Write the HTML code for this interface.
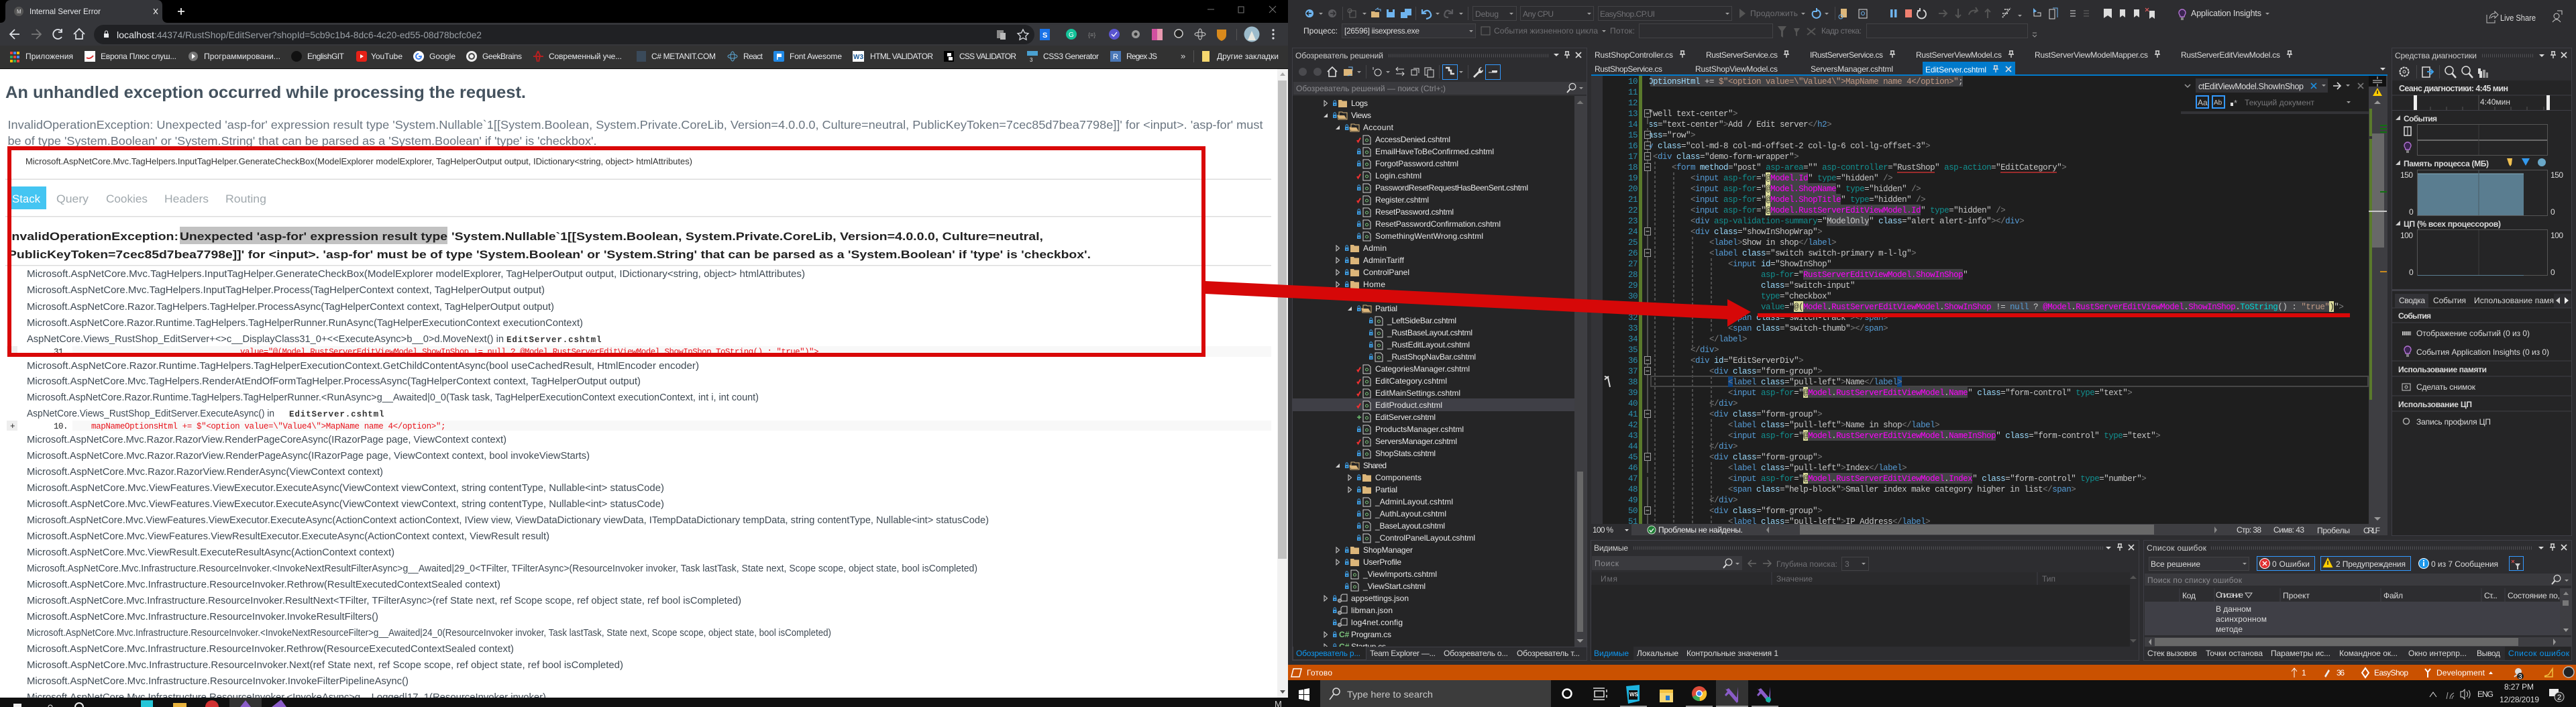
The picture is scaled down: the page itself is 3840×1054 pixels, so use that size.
<!DOCTYPE html>
<html><head><meta charset="utf-8"><title>Internal Server Error</title>
<style>
html,body{margin:0;padding:0;background:#000;width:3840px;height:1054px;overflow:hidden}
svg{display:block;position:absolute;left:0;top:0}
text{font-family:"Liberation Sans","Noto Sans CJK JP",sans-serif;white-space:pre}
.m text,text.m{font-family:"Liberation Mono","DejaVu Sans Mono",monospace;font-size:12.5px;letter-spacing:-.5px}
.g{fill:#808080}.b{fill:#569cd6}.a{fill:#9cdcfe}.t{fill:#129090}.p{fill:#ff00ff}.s{fill:#c09a84}.k{fill:#1e1e1e}.c{fill:#00d8d8}
.ln text{font-family:"Liberation Mono",monospace;font-size:12.5px;letter-spacing:-.5px;fill:#2b91af;text-anchor:end}
.st text{font-size:14.5px;fill:#3f4a54}
.tr text{font-size:12px;fill:#e8e8e8}
.bm text{font-size:12px;fill:#e8eaed}
.ui text{font-size:12px;fill:#dcdcdc}
.dim text{font-size:12px;fill:#707074}
.blue{fill:#0e97f0 !important}
</style></head><body>
<svg width="3840" height="1054" viewBox="0 0 3840 1054" xmlns="http://www.w3.org/2000/svg">
<defs>
<clipPath id="cc"><rect x="2459" y="113" width="1072" height="668"/></clipPath>
<clipPath id="ct"><rect x="1927" y="143" width="420" height="821"/></clipPath>
<clipPath id="cb"><rect x="0" y="103" width="1904" height="937"/></clipPath>
<g id="l"><rect x="-27" y="-1" width="5.5" height="5" fill="#3d9be0"/><path d="M-26 -1v-1.5a1.7 1.7 0 0 1 3.4 0V-1" fill="none" stroke="#3d9be0"/><rect x="-25" y="1" width="1.5" height="1.5" fill="#252526"/></g>
<g id="fi"><path d="M-18 -6h8l3 3v10h-11z" fill="#252526" stroke="#d0d0d0"/><circle cx="-12.5" cy="1" r="2" fill="none" stroke="#7cc47c"/></g>
<g id="ck"><path d="M-27 1l1.5 2.5 3.5-6" stroke="#f03030" stroke-width="2" fill="none"/></g>
<g id="lf"><use href="#l"/><use href="#fi"/></g>
<g id="cf"><use href="#ck"/><use href="#fi"/></g>
<g id="cl"><path d="M-40 -4l4.5 4-4.5 4z" fill="none" stroke="#d0d0d0"/><use href="#l"/><path d="M-19 -5h5l1 1.5h7v9.5h-13z" fill="#dcb67a"/></g>
<g id="op"><path d="M-35 -3v6h-6z" fill="#d0d0d0"/><use href="#l"/><path d="M-18 -5h5l1 1h6v10h-13l-1-6h2z" fill="#252526" stroke="#dcb67a"/><path d="M-20 0h10l3 5h-11z" fill="#dcb67a"/></g>
<g id="jn"><use href="#l"/><path d="M-15 4v-8l2-2h7v10z" fill="#252526" stroke="#d0d0d0"/><circle cx="-17" cy="3.5" r="2.5" fill="#777" stroke="#ccc"/></g>
<g id="pin"><path d="M-3 -5h6M-2 -5v5h4v-5M-4 0h8M0 0v5" stroke="#dcdcdc" stroke-width="1.4" fill="none"/></g>
<g id="xx"><path d="M-4 -4l8 8M4 -4l-8 8" stroke="#dcdcdc" stroke-width="1.6"/></g>
<g id="dn"><path d="M-3 -2h6l-3 3z" fill="#a0a0a0"/></g>
<g id="se"><circle r="6" fill="none" stroke="#dcdcdc" stroke-width="1.5"/><path d="M4 4l6 7" stroke="#dcdcdc" stroke-width="2.5"/></g>
<g id="bu"><path d="M-5 -2a5 5 0 1 1 10 0c0 3-2 3-2 6h-6c0-3-2-3-2-6z" fill="#3a2450" stroke="#b070d0" stroke-width="1.4"/><path d="M-2 6h4M-2 8h4" stroke="#ddd"/></g>
</defs>

<!-- browser chrome -->
<rect x="0" y="0" width="1920" height="34" fill="#000"/>
<rect x="0" y="34" width="1920" height="34" fill="#35363a"/>
<rect x="0" y="68" width="1920" height="34" fill="#323232"/>
<rect x="0" y="102" width="1920" height="1" fill="#111"/>
<path d="M0 34c6 0 8-3 8-8V8c0-5 3-8 8-8h218c5 0 8 3 8 8v18c0 5 3 8 8 8z" fill="#35363a"/>
<circle cx="28" cy="17" r="7" fill="#555"/><text x="25" y="20" font-size="8" fill="#ddd">M</text>
<text x="44" y="21" font-size="12" fill="#e8eaed" textLength="106" lengthAdjust="spacingAndGlyphs">Internal Server Error</text>
<path d="M229 13l6 8M235 13l-6 8" stroke="#ddd" stroke-width="1.3"/>
<path d="M270 12v10M265 17h10" stroke="#eee" stroke-width="1.8"/>
<path d="M1800 14h10" stroke="#777"/><rect x="1846" y="10" width="8" height="9" fill="none" stroke="#777"/><path d="M1892 9l10 10M1902 9l-10 10" stroke="#777"/>
<path d="M29 51H15M22 44l-7 7 7 7" fill="none" stroke="#dee1e6" stroke-width="1.8"/>
<path d="M47 51h14M54 44l7 7-7 7" fill="none" stroke="#777" stroke-width="1.8"/>
<path d="M92 47a7 7 0 1 0 0 8M92 43v5h-5" fill="none" stroke="#dee1e6" stroke-width="1.8"/>
<path d="M110 51l8-8 8 8M113 50v8h10v-8" fill="none" stroke="#dee1e6" stroke-width="1.7"/>
<rect x="140" y="37" width="1402" height="29" rx="14.5" fill="#202124"/>
<rect x="155" y="50" width="7" height="6" fill="#e8eaed"/><path d="M156.500 50v-2a2 2 0 0 1 4 0v2" fill="none" stroke="#e8eaed"/>
<text x="174" y="57" font-size="14" fill="#e8eaed" textLength="56" lengthAdjust="spacingAndGlyphs">localhost</text>
<text x="230" y="57" font-size="14" fill="#9aa0a6" textLength="488" lengthAdjust="spacingAndGlyphs">:44374/RustShop/EditServer?shopId=5cb9c1b4-8dc6-4c20-ed55-08d78bcfc0e2</text>
<rect x="1486" y="45" width="10" height="12" fill="#888"/><rect x="1491" y="49" width="8" height="10" fill="#bbb"/>
<path d="M1525 44l2.500 5 5.500.8-4 3.900 1 5.500-5-2.600-5 2.600 1-5.500-4-3.900 5.500-.8z" fill="none" stroke="#dee1e6" stroke-width="1.3"/>
<rect x="1550" y="43" width="15" height="17" fill="#1a73e8"/><text x="1554" y="56" font-size="11" font-weight="bold" fill="#fff">S</text>
<circle cx="1597" cy="51" r="8" fill="#15c39a"/><text x="1593" y="55" font-size="10" fill="#fff">G</text>
<text x="1622" y="55" font-size="9" fill="#888">{≡}</text>
<circle cx="1661" cy="51" r="8" fill="#5a55d0"/><path d="M1657 51l3 3 5-6" fill="none" stroke="#fff" stroke-width="1.3"/>
<circle cx="1693" cy="51" r="6" fill="#999"/><circle cx="1693" cy="51" r="2.500" fill="#333"/>
<rect x="1717" y="43" width="16" height="17" fill="#d050a0"/><rect x="1725" y="43" width="8" height="17" fill="#e898b0"/>
<circle cx="1757" cy="50" r="6" fill="#222" stroke="#ccc" stroke-width="1.500"/>
<ellipse cx="1789" cy="51" rx="8" ry="3" fill="none" stroke="#ccc"/><ellipse cx="1789" cy="51" rx="3" ry="8" fill="none" stroke="#ccc"/>
<path d="M1814 44h14v8q0 6-7 9-7-3-7-9z" fill="#d98a1c"/>
<rect x="1843" y="43" width="1" height="17" fill="#555"/>
<circle cx="1866" cy="51" r="11.500" fill="#9dbccc"/><path d="M1860 60l6-14 6 14z" fill="#e8e8e0"/>
<circle cx="1898" cy="45" r="1.600" fill="#dee1e6"/><circle cx="1898" cy="51" r="1.600" fill="#dee1e6"/><circle cx="1898" cy="57" r="1.600" fill="#dee1e6"/>
<!-- bookmarks -->
<g fill="#e8a317"><rect x="15" y="77" width="4" height="4" fill="#ea4335"/><rect x="20" y="77" width="4" height="4" fill="#4285f4"/><rect x="25" y="77" width="4" height="4" fill="#fbbc04"/><rect x="15" y="83" width="4" height="4" fill="#34a853"/><rect x="20" y="83" width="4" height="4" fill="#ea4335"/><rect x="25" y="83" width="4" height="4" fill="#4285f4"/><rect x="15" y="89" width="4" height="4" fill="#fbbc04"/><rect x="20" y="89" width="4" height="4" fill="#34a853"/><rect x="25" y="89" width="4" height="4" fill="#ea4335"/></g>
<rect x="126" y="76" width="16" height="16" fill="#fff"/><path d="M129 86q5 3 10-3" stroke="#d33" stroke-width="2" fill="none"/>
<circle cx="288" cy="84" r="7" fill="#777"/><path d="M286 80l5 4-5 4z" fill="#fff"/>
<circle cx="442" cy="84" r="8" fill="#111"/>
<rect x="531" y="76" width="16" height="16" rx="3" fill="#e62117"/><path d="M537 81l5 3-5 3z" fill="#fff"/>
<circle cx="624" cy="84" r="8" fill="#fff"/><path d="M624 80a4 4 0 1 0 4 4h-4" fill="none" stroke="#4285f4" stroke-width="2"/>
<circle cx="703" cy="84" r="8" fill="#eee"/><circle cx="703" cy="84" r="4" fill="none" stroke="#444" stroke-width="2"/>
<path d="M802 76l3 7-2 9M802 76l-3 7 2 9M795 84h15" stroke="#b52020" stroke-width="2" fill="none"/>
<rect x="949" y="76" width="14" height="16" fill="#3a4a5a"/>
<ellipse cx="1092" cy="84" rx="7" ry="3" fill="none" stroke="#5ba4cf"/><ellipse cx="1092" cy="84" rx="3" ry="7" fill="none" stroke="#5ba4cf"/>
<rect x="1153" y="76" width="16" height="16" rx="2" fill="#228ae6"/><rect x="1159" y="80" width="6" height="5" fill="#fff"/><rect x="1158" y="80" width="1.500" height="9" fill="#fff"/>
<rect x="1271" y="76" width="17" height="16" fill="#fff"/><text x="1272" y="88" font-size="10" font-weight="bold" fill="#1a5a9a">W3</text>
<rect x="1407" y="76" width="15" height="16" fill="#000"/><rect x="1412" y="79" width="6" height="5" fill="#fff"/><rect x="1414" y="85" width="6" height="5" fill="#fff"/>
<rect x="1531" y="76" width="16" height="7" fill="#4aa0d0"/><text x="1535" y="92" font-size="8" fill="#eee">3</text>
<rect x="1655" y="76" width="16" height="16" fill="#4a78b8"/><text x="1659" y="88" font-size="11" fill="#fff">R</text>
<text x="1760" y="88" font-size="13" fill="#ddd">»</text><rect x="1779" y="75" width="1" height="18" fill="#555"/>
<rect x="1792" y="76" width="11" height="16" fill="#f5d76e"/>
<g class="bm">
<text x="38" y="88" textLength="71">Приложения</text>
<text x="150" y="88" textLength="113">Европа Плюс слуш...</text>
<text x="304" y="88" textLength="114">Программировани...</text>
<text x="458" y="88" textLength="55">EnglishGIT</text>
<text x="553" y="88" textLength="47">YouTube</text>
<text x="640" y="88" textLength="39">Google</text>
<text x="719" y="88" textLength="59">GeekBrains</text>
<text x="818" y="88" textLength="109">Современный уче...</text>
<text x="971" y="88" textLength="96">C# METANIT.COM</text>
<text x="1108" y="88" textLength="29">React</text>
<text x="1177" y="88" textLength="78">Font Awesome</text>
<text x="1297" y="88" textLength="94">HTML VALIDATOR</text>
<text x="1430" y="88" textLength="85">CSS VALIDATOR</text>
<text x="1555" y="88" textLength="83">CSS3 Generator</text>
<text x="1679" y="88" textLength="46">Regex JS</text>
<text x="1814" y="88" textLength="92">Другие закладки</text>
</g>

<!-- page -->
<rect x="0" y="103" width="1920" height="937" fill="#fff"/>
<rect x="1904" y="103" width="16" height="937" fill="#f1f1f1"/>
<rect x="1905" y="120" width="13" height="713" fill="#c1c1c1"/>
<path d="M1912 108l4 5h-8z" fill="#a8a8a8"/><path d="M1912 1034l4-5h-8z" fill="#505050"/>
<g clip-path="url(#cb)">
<text x="8" y="146" font-size="25" font-weight="bold" fill="#44525e" textLength="776" lengthAdjust="spacingAndGlyphs">An unhandled exception occurred while processing the request.</text>
<text x="11.500" y="192" font-size="17.500" fill="#6a7580" textLength="1871" lengthAdjust="spacingAndGlyphs">InvalidOperationException: Unexpected 'asp-for' expression result type 'System.Nullable`1[[System.Boolean, System.Private.CoreLib, Version=4.0.0.0, Culture=neutral, PublicKeyToken=7cec85d7bea7798e]]' for &lt;input&gt;. 'asp-for' must</text>
<text x="11.500" y="216" font-size="17.500" fill="#6a7580" textLength="878" lengthAdjust="spacingAndGlyphs">be of type 'System.Boolean' or 'System.String' that can be parsed as a 'System.Boolean' if 'type' is 'checkbox'.</text>
<text x="38" y="245" font-size="12.500" fill="#333" textLength="994" lengthAdjust="spacingAndGlyphs">Microsoft.AspNetCore.Mvc.TagHelpers.InputTagHelper.GenerateCheckBox(ModelExplorer modelExplorer, TagHelperOutput output, IDictionary&lt;string, object&gt; htmlAttributes)</text>
<rect x="8" y="266.500" width="1887" height="1.500" fill="#ddd"/><rect x="8" y="322" width="1887" height="1.500" fill="#ddd"/><rect x="8" y="395" width="1887" height="1.500" fill="#ddd"/>
<rect x="17" y="278" width="52" height="34" fill="#44c5f2"/>
<text x="18" y="302" font-size="17" fill="#fff" textLength="42" lengthAdjust="spacingAndGlyphs">Stack</text>
<g font-size="17" fill="#a0a8ad"><text x="84" y="302" textLength="48" lengthAdjust="spacingAndGlyphs">Query</text><text x="158" y="302" textLength="62" lengthAdjust="spacingAndGlyphs">Cookies</text><text x="245" y="302" textLength="66" lengthAdjust="spacingAndGlyphs">Headers</text><text x="336" y="302" textLength="61" lengthAdjust="spacingAndGlyphs">Routing</text></g>
<rect x="268" y="338" width="399" height="26" fill="#c2c2c2"/>
<g font-size="17" font-weight="bold" fill="#222">
<text x="12" y="358" textLength="254" lengthAdjust="spacingAndGlyphs">InvalidOperationException:</text>
<text x="268" y="358" textLength="399" lengthAdjust="spacingAndGlyphs">Unexpected 'asp-for' expression result type</text>
<text x="673" y="358" textLength="882" lengthAdjust="spacingAndGlyphs">'System.Nullable`1[[System.Boolean, System.Private.CoreLib, Version=4.0.0.0, Culture=neutral,</text>
<text x="12" y="385" textLength="1614" lengthAdjust="spacingAndGlyphs">PublicKeyToken=7cec85d7bea7798e]]' for &lt;input&gt;. 'asp-for' must be of type 'System.Boolean' or 'System.String' that can be parsed as a 'System.Boolean' if 'type' is 'checkbox'.</text>
</g>
<g class="st">
<text x="40" y="413" textLength="1160" lengthAdjust="spacingAndGlyphs">Microsoft.AspNetCore.Mvc.TagHelpers.InputTagHelper.GenerateCheckBox(ModelExplorer modelExplorer, TagHelperOutput output, IDictionary&lt;string, object&gt; htmlAttributes)</text>
<text x="40" y="437" textLength="772" lengthAdjust="spacingAndGlyphs">Microsoft.AspNetCore.Mvc.TagHelpers.InputTagHelper.Process(TagHelperContext context, TagHelperOutput output)</text>
<text x="40" y="462" textLength="786" lengthAdjust="spacingAndGlyphs">Microsoft.AspNetCore.Razor.TagHelpers.TagHelper.ProcessAsync(TagHelperContext context, TagHelperOutput output)</text>
<text x="40" y="486" textLength="829" lengthAdjust="spacingAndGlyphs">Microsoft.AspNetCore.Razor.Runtime.TagHelpers.TagHelperRunner.RunAsync(TagHelperExecutionContext executionContext)</text>
<text x="40" y="510" textLength="711" lengthAdjust="spacingAndGlyphs">AspNetCore.Views_RustShop_EditServer+&lt;&gt;c__DisplayClass31_0+&lt;&lt;ExecuteAsync&gt;b__0&gt;d.MoveNext() in</text>
<text x="40" y="550" textLength="1002" lengthAdjust="spacingAndGlyphs">Microsoft.AspNetCore.Razor.Runtime.TagHelpers.TagHelperExecutionContext.GetChildContentAsync(bool useCachedResult, HtmlEncoder encoder)</text>
<text x="40" y="573" textLength="915" lengthAdjust="spacingAndGlyphs">Microsoft.AspNetCore.Mvc.TagHelpers.RenderAtEndOfFormTagHelper.ProcessAsync(TagHelperContext context, TagHelperOutput output)</text>
<text x="40" y="597" textLength="1091" lengthAdjust="spacingAndGlyphs">Microsoft.AspNetCore.Razor.Runtime.TagHelpers.TagHelperRunner.&lt;RunAsync&gt;g__Awaited|0_0(Task task, TagHelperExecutionContext executionContext, int i, int count)</text>
<text x="40" y="621" textLength="369" lengthAdjust="spacingAndGlyphs">AspNetCore.Views_RustShop_EditServer.ExecuteAsync() in</text>
<text x="40" y="660" textLength="715" lengthAdjust="spacingAndGlyphs">Microsoft.AspNetCore.Mvc.Razor.RazorView.RenderPageCoreAsync(IRazorPage page, ViewContext context)</text>
<text x="40" y="684" textLength="839" lengthAdjust="spacingAndGlyphs">Microsoft.AspNetCore.Mvc.Razor.RazorView.RenderPageAsync(IRazorPage page, ViewContext context, bool invokeViewStarts)</text>
<text x="40" y="708" textLength="531" lengthAdjust="spacingAndGlyphs">Microsoft.AspNetCore.Mvc.Razor.RazorView.RenderAsync(ViewContext context)</text>
<text x="40" y="732" textLength="950" lengthAdjust="spacingAndGlyphs">Microsoft.AspNetCore.Mvc.ViewFeatures.ViewExecutor.ExecuteAsync(ViewContext viewContext, string contentType, Nullable&lt;int&gt; statusCode)</text>
<text x="40" y="756" textLength="950" lengthAdjust="spacingAndGlyphs">Microsoft.AspNetCore.Mvc.ViewFeatures.ViewExecutor.ExecuteAsync(ViewContext viewContext, string contentType, Nullable&lt;int&gt; statusCode)</text>
<text x="40" y="780" textLength="1434" lengthAdjust="spacingAndGlyphs">Microsoft.AspNetCore.Mvc.ViewFeatures.ViewExecutor.ExecuteAsync(ActionContext actionContext, IView view, ViewDataDictionary viewData, ITempDataDictionary tempData, string contentType, Nullable&lt;int&gt; statusCode)</text>
<text x="40" y="804" textLength="779" lengthAdjust="spacingAndGlyphs">Microsoft.AspNetCore.Mvc.ViewFeatures.ViewResultExecutor.ExecuteAsync(ActionContext context, ViewResult result)</text>
<text x="40" y="828" textLength="548" lengthAdjust="spacingAndGlyphs">Microsoft.AspNetCore.Mvc.ViewResult.ExecuteResultAsync(ActionContext context)</text>
<text x="40" y="852" textLength="1417" lengthAdjust="spacingAndGlyphs">Microsoft.AspNetCore.Mvc.Infrastructure.ResourceInvoker.&lt;InvokeNextResultFilterAsync&gt;g__Awaited|29_0&lt;TFilter, TFilterAsync&gt;(ResourceInvoker invoker, Task lastTask, State next, Scope scope, object state, bool isCompleted)</text>
<text x="40" y="876" textLength="706" lengthAdjust="spacingAndGlyphs">Microsoft.AspNetCore.Mvc.Infrastructure.ResourceInvoker.Rethrow(ResultExecutedContextSealed context)</text>
<text x="40" y="900" textLength="1065" lengthAdjust="spacingAndGlyphs">Microsoft.AspNetCore.Mvc.Infrastructure.ResourceInvoker.ResultNext&lt;TFilter, TFilterAsync&gt;(ref State next, ref Scope scope, ref object state, ref bool isCompleted)</text>
<text x="40" y="924" textLength="524" lengthAdjust="spacingAndGlyphs">Microsoft.AspNetCore.Mvc.Infrastructure.ResourceInvoker.InvokeResultFilters()</text>
<text x="40" y="948" textLength="1199" lengthAdjust="spacingAndGlyphs">Microsoft.AspNetCore.Mvc.Infrastructure.ResourceInvoker.&lt;InvokeNextResourceFilter&gt;g__Awaited|24_0(ResourceInvoker invoker, Task lastTask, State next, Scope scope, object state, bool isCompleted)</text>
<text x="40" y="972" textLength="726" lengthAdjust="spacingAndGlyphs">Microsoft.AspNetCore.Mvc.Infrastructure.ResourceInvoker.Rethrow(ResourceExecutedContextSealed context)</text>
<text x="40" y="996" textLength="889" lengthAdjust="spacingAndGlyphs">Microsoft.AspNetCore.Mvc.Infrastructure.ResourceInvoker.Next(ref State next, ref Scope scope, ref object state, ref bool isCompleted)</text>
<text x="40" y="1020" textLength="569" lengthAdjust="spacingAndGlyphs">Microsoft.AspNetCore.Mvc.Infrastructure.ResourceInvoker.InvokeFilterPipelineAsync()</text>
<text x="40" y="1044" textLength="774" lengthAdjust="spacingAndGlyphs">Microsoft.AspNetCore.Mvc.Infrastructure.ResourceInvoker.&lt;InvokeAsync&gt;g__Logged|17_1(ResourceInvoker invoker)</text>
</g>
<g font-family="Liberation Mono" font-weight="bold" font-size="13" fill="#333">
<text class="m" x="755" y="510" font-weight="bold" fill="#333" textLength="141">EditServer.cshtml</text>
<text class="m" x="431" y="621" font-weight="bold" fill="#333" textLength="141">EditServer.cshtml</text>
</g>
<rect x="10" y="516" width="16" height="16" fill="#eee"/><rect x="108" y="516" width="1787" height="16" fill="#f8f8f8"/>
<text class="m" x="80" y="528" fill="#222">31</text>
<text class="m" x="358" y="528" fill="#e8141c" textLength="862">value="@(Model.RustServerEditViewModel.ShowInShop != null ? @Model.RustServerEditViewModel.ShowInShop.ToString() : "true")"&gt;</text>
<rect x="10" y="627" width="16" height="15" fill="#eee"/><rect x="108" y="627" width="1787" height="15" fill="#f8f8f8"/>
<text class="m" x="15" y="639" fill="#222">+</text>
<text class="m" x="80" y="639" fill="#222">10.</text>
<text class="m" x="136" y="639" fill="#e8141c" textLength="528">mapNameOptionsHtml += $"&lt;option value=\"Value4\"&gt;MapName name 4&lt;/option&gt;";</text>
</g>
<!-- left taskbar -->
<rect x="0" y="1040" width="1920" height="14" fill="#101010"/>
<rect x="342" y="1040" width="48" height="14" fill="#333"/>
<rect x="20" y="1049" width="12" height="5" fill="#eee"/><circle cx="75" cy="1054" r="3" fill="none" stroke="#eee"/><circle cx="118" cy="1054" r="6" fill="none" stroke="#eee" stroke-width="2"/>
<rect x="210" y="1044" width="18" height="10" fill="#25c6d8"/><rect x="258" y="1048" width="20" height="6" fill="#e8b23c"/><circle cx="316" cy="1054" r="10" fill="#d03030"/>
<path d="M358 1054l8-10 8 10z" fill="#8a5cc8"/><path d="M405 1054l14-11 8 11z" fill="#8a5cc8"/>
<text x="1900" y="1054" font-size="13" fill="#ccc">M</text>

<!-- VS window -->
<rect x="1920" y="0" width="1920" height="1014" fill="#2d2d30"/>
<!-- toolbar row 1 -->
<g>
<circle cx="1952" cy="20" r="6" fill="#6fb4ee"/><path d="M1955 20h-6M1951 17l-3 3 3 3" stroke="#1e1e1e" stroke-width="1.500" fill="none"/>
<use href="#dn" x="1969" y="21"/>
<circle cx="1986" cy="20" r="6" fill="#5a5a5e"/><path d="M1983 20h6M1987 17l3 3-3 3" stroke="#2d2d30" stroke-width="1.500" fill="none"/>
<rect x="2001" y="10" width="1" height="20" fill="#46464a"/>
<rect x="2012" y="16" width="9" height="10" fill="none" stroke="#666"/><circle cx="2012" cy="16" r="3" fill="none" stroke="#666"/>
<use href="#dn" x="2034" y="21"/>
<path d="M2044 26v-9h5l1 1h6v8z" fill="#dcb67a"/><path d="M2050 15l4-3v2h4v3" stroke="#6fb4ee" fill="none"/>
<rect x="2067" y="14" width="12" height="12" fill="#6fb4ee"/><rect x="2070" y="14" width="6" height="4" fill="#2d2d30"/>
<rect x="2088" y="18" width="10" height="9" fill="#6fb4ee"/><rect x="2094" y="13" width="10" height="10" fill="#6fb4ee"/>
<rect x="2110" y="10" width="1" height="20" fill="#46464a"/>
<path d="M2120 14v6h6M2120 20q8-8 12-1t-6 9" fill="none" stroke="#6fb4ee" stroke-width="2.200"/>
<use href="#dn" x="2143" y="21"/>
<path d="M2165 14v6h-6M2165 20q-8-8-11-1t5 7" fill="none" stroke="#5a5a5e" stroke-width="2.200"/>
<use href="#dn" x="2178" y="21"/>
<rect x="2188" y="10" width="1" height="20" fill="#46464a"/>
<g fill="#2d2d30" stroke="#434346"><rect x="2195.500" y="9.500" width="65" height="21"/><rect x="2266.500" y="9.500" width="109" height="21"/><rect x="2382.500" y="9.500" width="199" height="21"/></g>
<g class="dim"><text x="2199" y="25" font-size="13" textLength="35">Debug</text><text x="2270" y="25" textLength="46">Any CPU</text><text x="2385" y="25" textLength="82">EasyShop.CP.UI</text><text x="2609" y="24" textLength="71">Продолжить</text></g>
<use href="#dn" x="2253" y="21"/><use href="#dn" x="2369" y="21"/><use href="#dn" x="2575" y="21"/><use href="#dn" x="2688" y="21"/>
<path d="M2593 13l9 7-9 7z" fill="#555"/>
<path d="M2703 17a6 6 0 1 0 6-2M2708 12v5h-5" fill="none" stroke="#6fb4ee" stroke-width="2"/>
<use href="#dn" x="2723" y="21"/><rect x="2735" y="10" width="1" height="20" fill="#46464a"/>
<rect x="2744" y="13" width="9" height="13" fill="#dcb67a"/><circle cx="2744" cy="25" r="3" fill="none" stroke="#6fb4ee"/>
<rect x="2771" y="14" width="12" height="13" fill="none" stroke="#dcdcdc"/><circle cx="2777" cy="20" r="2.500" fill="none" stroke="#6fb4ee"/>
<rect x="2818" y="14" width="3.500" height="12" fill="#6fb4ee"/><rect x="2824" y="14" width="3.500" height="12" fill="#6fb4ee"/>
<rect x="2840" y="14" width="10" height="12" fill="#f08070"/>
<path d="M2862 15a6.500 6.500 0 1 0 5 0M2862 12v4h-4" fill="none" stroke="#dcdcdc" stroke-width="1.800"/>
<g stroke="#555" stroke-width="2" fill="none"><path d="M2890 20h12M2897 15l5 5-5 5"/><path d="M2919 13v14M2915 22l4 4 4-4"/><path d="M2935 22q2-8 12-6M2945 11l3 5-5 3"/><path d="M2963 27V13M2959 18l4-4 4 4"/></g>
<path d="M2985 26l12-14M2988 14h9M2985 20h9" stroke="#bbb" fill="none" stroke-dasharray="2 1" stroke-width="2"/>
<use href="#dn" x="3011" y="24"/>
<path d="M3032 14v10h10v-5h-5" stroke="#dcdcdc" fill="none"/><path d="M3031 12l5 5-5 2z" fill="#6fb4ee"/>
<rect x="3055" y="14" width="8" height="14" fill="none" stroke="#dcdcdc"/><path d="M3060 12h7v14" stroke="#6fb4ee" fill="none"/>
<g stroke="#dcdcdc"><path d="M3086 16h8M3086 20h8M3086 24h8"/></g><g stroke="#666"><path d="M3106 16h8M3106 20h8M3106 24h8"/></g>
<path d="M3136 13h12v14l-6-4-6 4z" fill="#ddd"/><path d="M3160 14h8v12l-4-3-4 3z" fill="#ddd"/><path d="M3181 14h8v12l-4-3-4 3z" fill="#ddd"/><path d="M3204 16h8v12l-4-3-4 3z" fill="#ddd"/><path d="M3198 12l5 5M3203 12l-5 5" stroke="#f06060"/>
<use href="#bu" x="3253" y="21"/>
<text x="3266" y="24" font-size="12.500" fill="#dcdcdc" textLength="105">Application Insights</text>
<use href="#dn" x="3380" y="21"/>
<path d="M3707 22v12h12v-4M3711 28q1-8 8-8v-3l5 5-5 5v-3q-4 0-6 3" fill="none" stroke="#bbb"/>
<text x="3727" y="31" font-size="13" fill="#dcdcdc" textLength="53" lengthAdjust="spacingAndGlyphs">Live Share</text>
<circle cx="3811" cy="24" r="4" fill="none" stroke="#ccc"/><path d="M3805 33q6-8 12 0M3812 16h7v6" stroke="#ccc" fill="none"/>
</g>
<!-- toolbar row 2 -->
<text x="1943" y="50" font-size="12" fill="#e0e0e0" textLength="51">Процесс:</text>
<rect x="2000.500" y="35.500" width="199" height="21" fill="#333337" stroke="#434346"/>
<text x="2004" y="50" font-size="12" fill="#dcdcdc" textLength="112">[26596] iisexpress.exe</text><use href="#dn" x="2193" y="47"/>
<rect x="2208" y="40" width="13" height="12" fill="none" stroke="#666"/>
<text x="2227" y="50" font-size="12" fill="#707074" textLength="155">События жизненного цикла</text><use href="#dn" x="2391" y="47"/>
<text x="2400" y="50" font-size="12" fill="#707074" textLength="37">Поток:</text>
<rect x="2443.500" y="35.500" width="199" height="21" fill="#2d2d30" stroke="#434346"/>
<path d="M2650 39h13l-5 7v10l-3-2v-8z" fill="#555"/><path d="M2674 42h9l-4 6v6l-2-1v-5z" fill="#555"/><path d="M2694 42l12 10M2706 42l-12 10" stroke="#555" stroke-width="2"/>
<text x="2715" y="50" font-size="12" fill="#707074" textLength="60">Кадр стека:</text>
<rect x="2782.500" y="35.500" width="240" height="21" fill="#2d2d30" stroke="#434346"/>
<path d="M3030 49h6M3030 52l3 3 3-3" stroke="#999" fill="none"/>

<!-- Solution Explorer -->
<rect x="1926.500" y="71.500" width="439" height="913" fill="#2d2d30" stroke="#3f3f46"/>
<text x="1931" y="87" font-size="12" fill="#d0d0d0" textLength="131">Обозреватель решений</text>
<path d="M2070 83h238" stroke="#505054" stroke-width="5" stroke-dasharray="1 2"/>
<path d="M2316 80h8l-4 4z" fill="#dcdcdc"/><use href="#pin" x="2336" y="82"/><use href="#xx" x="2353" y="82"/>
<!-- solution toolbar -->
<circle cx="1942" cy="107" r="6" fill="#4a4a4e"/><circle cx="1964" cy="107" r="6" fill="#4a4a4e"/>
<path d="M1979 107l7-7 7 7M1981 106v8h10v-8" fill="none" stroke="#dcdcdc" stroke-width="1.600"/>
<rect x="2003" y="103" width="13" height="10" fill="#dcb67a"/><path d="M2010 100h6v5M2009 113l6-2" stroke="#6fb4ee" fill="none"/>
<use href="#dn" x="2026" y="108"/><rect x="2036" y="97" width="1" height="20" fill="#46464a"/>
<circle cx="2054" cy="108" r="5" fill="none" stroke="#dcdcdc"/><path d="M2047 100v4" stroke="#dcdcdc"/><use href="#dn" x="2069" y="108"/>
<path d="M2081 103h12M2084 100l-3 3 3 3M2093 110h-12M2090 107l3 3-3 3" stroke="#dcdcdc" fill="none"/>
<rect x="2104" y="104" width="8" height="8" fill="none" stroke="#dcdcdc"/><path d="M2107 102h8v7" stroke="#dcdcdc" fill="none"/>
<rect x="2124" y="101" width="9" height="11" fill="none" stroke="#dcdcdc"/><rect x="2128" y="104" width="9" height="11" fill="#2d2d30" stroke="#dcdcdc"/>
<rect x="2145" y="97" width="1" height="20" fill="#46464a"/>
<rect x="2150.500" y="96.500" width="22" height="22" fill="none" stroke="#3399ff"/><path d="M2155 101h5v4h3v5h5" stroke="#dcdcdc" stroke-width="2.500" fill="none"/>
<use href="#dn" x="2178" y="108"/><rect x="2188" y="97" width="1" height="20" fill="#46464a"/>
<path d="M2196 114l8-8a5 5 0 0 1 5-6l-3 3 2 3 3-2a5 5 0 0 1-6 5l-7 7z" fill="#dcdcdc"/>
<rect x="2214.500" y="96.500" width="22" height="22" fill="none" stroke="#3399ff"/><path d="M2219 108h12" stroke="#dcdcdc" stroke-width="1"/><rect x="2224" y="105" width="8" height="3" fill="#dcdcdc"/>
<rect x="1928" y="122" width="437" height="19" fill="#3a3a3e"/>
<text x="1932" y="136" font-size="12" fill="#8c8c90" textLength="223">Обозреватель решений — поиск (Ctrl+;)</text>
<use href="#se" x="2344" y="129" transform="translate(2344,130) scale(-.8,.8) translate(-2344,-130)"/><use href="#dn" x="2357" y="132"/>
<!-- tree -->
<rect x="1927" y="143" width="420" height="821" fill="#252526"/>
<rect x="2347" y="143" width="18" height="821" fill="#3e3e42"/>
<rect x="2351" y="703" width="9" height="239" fill="#686868"/>
<path d="M2355.500 150l5 5h-10z" fill="#777"/><path d="M2355.500 958l5-5h-10z" fill="#999"/>
<rect x="1927" y="594" width="420" height="19" fill="#3f3f46"/>
<g clip-path="url(#ct)"><g class="tr">
<use href="#cl" x="2014" y="154"/><text x="2014" y="158" textLength="25">Logs</text>
<use href="#op" x="2014" y="172"/><text x="2014" y="176" textLength="30">Views</text>
<use href="#op" x="2032" y="190"/><text x="2032" y="194" textLength="45">Account</text>
<use href="#cf" x="2050" y="208"/><text x="2050" y="212" textLength="112">AccessDenied.cshtml</text>
<use href="#lf" x="2050" y="226"/><text x="2050" y="230" textLength="177">EmailHaveToBeConfirmed.cshtml</text>
<use href="#lf" x="2050" y="244"/><text x="2050" y="248" textLength="124">ForgotPassword.cshtml</text>
<use href="#cf" x="2050" y="262"/><text x="2050" y="266" textLength="69">Login.cshtml</text>
<use href="#lf" x="2050" y="280"/><text x="2050" y="284" textLength="228">PasswordResetRequestHasBeenSent.cshtml</text>
<use href="#cf" x="2050" y="298"/><text x="2050" y="302" textLength="80">Register.cshtml</text>
<use href="#lf" x="2050" y="316"/><text x="2050" y="320" textLength="117">ResetPassword.cshtml</text>
<use href="#lf" x="2050" y="334"/><text x="2050" y="338" textLength="187">ResetPasswordConfirmation.cshtml</text>
<use href="#lf" x="2050" y="352"/><text x="2050" y="356" textLength="161">SomethingWentWrong.cshtml</text>
<use href="#cl" x="2032" y="370"/><text x="2032" y="374" textLength="35">Admin</text>
<use href="#cl" x="2032" y="388"/><text x="2032" y="392" textLength="61">AdminTariff</text>
<use href="#cl" x="2032" y="406"/><text x="2032" y="410" textLength="69">ControlPanel</text>
<use href="#cl" x="2032" y="424"/><text x="2032" y="428" textLength="33">Home</text>
<use href="#op" x="2032" y="442"/><text x="2032" y="446" textLength="50">RustShop</text>
<use href="#op" x="2050" y="460"/><text x="2050" y="464" textLength="33">Partial</text>
<use href="#lf" x="2068" y="478"/><text x="2068" y="482" textLength="103">_LeftSideBar.cshtml</text>
<use href="#lf" x="2068" y="496"/><text x="2068" y="500" textLength="127">_RustBaseLayout.cshtml</text>
<use href="#lf" x="2068" y="514"/><text x="2068" y="518" textLength="123">_RustEditLayout.cshtml</text>
<use href="#lf" x="2068" y="532"/><text x="2068" y="536" textLength="132">_RustShopNavBar.cshtml</text>
<use href="#cf" x="2050" y="550"/><text x="2050" y="554" textLength="141">CategoriesManager.cshtml</text>
<use href="#cf" x="2050" y="568"/><text x="2050" y="572" textLength="107">EditCategory.cshtml</text>
<use href="#cf" x="2050" y="586"/><text x="2050" y="590" textLength="127">EditMainSettings.cshtml</text>
<use href="#cf" x="2050" y="604"/><text x="2050" y="608" textLength="100">EditProduct.cshtml</text>
<use href="#fi" x="2050" y="622"/><path d="M2023 622h6M2026 619v6" stroke="#6cc070" stroke-width="1.500"/><text x="2050" y="626" textLength="90">EditServer.cshtml</text>
<use href="#lf" x="2050" y="640"/><text x="2050" y="644" textLength="132">ProductsManager.cshtml</text>
<use href="#cf" x="2050" y="658"/><text x="2050" y="662" textLength="122">ServersManager.cshtml</text>
<use href="#lf" x="2050" y="676"/><text x="2050" y="680" textLength="90">ShopStats.cshtml</text>
<use href="#op" x="2032" y="694"/><text x="2032" y="698" textLength="35">Shared</text>
<use href="#cl" x="2050" y="712"/><text x="2050" y="716" textLength="69">Components</text>
<use href="#cl" x="2050" y="730"/><text x="2050" y="734" textLength="33">Partial</text>
<use href="#lf" x="2050" y="748"/><text x="2050" y="752" textLength="116">_AdminLayout.cshtml</text>
<use href="#lf" x="2050" y="766"/><text x="2050" y="770" textLength="106">_AuthLayout.cshtml</text>
<use href="#lf" x="2050" y="784"/><text x="2050" y="788" textLength="104">_BaseLayout.cshtml</text>
<use href="#lf" x="2050" y="802"/><text x="2050" y="806" textLength="149">_ControlPanelLayout.cshtml</text>
<use href="#cl" x="2032" y="820"/><text x="2032" y="824" textLength="74">ShopManager</text>
<use href="#cl" x="2032" y="838"/><text x="2032" y="842" textLength="57">UserProfile</text>
<use href="#lf" x="2032" y="856"/><text x="2032" y="860" textLength="110">_ViewImports.cshtml</text>
<use href="#lf" x="2032" y="874"/><text x="2032" y="878" textLength="93">_ViewStart.cshtml</text>
<use href="#jn" x="2014" y="892"/><path d="M1974 888l4.500 4-4.500 4z" fill="none" stroke="#d0d0d0"/><text x="2014" y="896" textLength="86">appsettings.json</text>
<use href="#jn" x="2014" y="910"/><text x="2014" y="914" textLength="62">libman.json</text>
<use href="#jn" x="2014" y="928"/><text x="2014" y="932" textLength="77">log4net.config</text>
<path d="M1974 942l4.500 4-4.500 4z" fill="none" stroke="#d0d0d0"/><use href="#l" x="2014" y="946"/><text x="1996" y="950" font-size="10" font-weight="bold" style="fill:#7cc47c">C#</text><text x="2014" y="950" textLength="60">Program.cs</text>
<path d="M1974 960l4.500 4-4.500 4z" fill="none" stroke="#d0d0d0"/><use href="#l" x="2014" y="964"/><text x="1996" y="968" font-size="10" font-weight="bold" style="fill:#7cc47c">C#</text><text x="2014" y="968" textLength="52">Startup.cs</text>
</g></g>
<rect x="1927" y="964" width="110" height="20" fill="#252526"/><path d="M1926.500 964.500h1v19h109v-19h330" fill="none" stroke="#3f3f46"/>
<g class="ui">
<text class="blue" x="1932" y="978" textLength="96">Обозреватель р...</text>
<text x="2042" y="978" textLength="98">Team Explorer —...</text>
<text x="2152" y="978" textLength="96">Обозреватель о...</text>
<text x="2261" y="978" textLength="94">Обозреватель т...</text>
</g>

<!-- tabs -->
<g class="ui">
<text x="2377" y="86" textLength="117">RustShopController.cs</text><use href="#pin" x="2508" y="81"/>
<text x="2543" y="86" textLength="107">RustServerService.cs</text><use href="#pin" x="2663" y="81"/>
<text x="2698" y="86" textLength="109">IRustServerService.cs</text><use href="#pin" x="2821" y="81"/>
<text x="2856" y="86" textLength="128">RustServerViewModel.cs</text><use href="#pin" x="2998" y="81"/>
<text x="3033" y="86" textLength="169">RustServerViewModelMapper.cs</text><use href="#pin" x="3216" y="81"/>
<text x="3251" y="86" textLength="148">RustServerEditViewModel.cs</text><use href="#pin" x="3413" y="81"/>
<text x="2377" y="107" textLength="101">RustShopService.cs</text>
<text x="2527" y="107" textLength="123">RustShopViewModel.cs</text>
<text x="2699" y="107" textLength="123">ServersManager.cshtml</text>
</g>
<rect x="2866" y="92" width="138" height="21" fill="#007acc"/>
<text x="2870" y="108" font-size="12" fill="#fff" textLength="91">EditServer.cshtml</text>
<use href="#pin" x="2975" y="103"/><use href="#xx" x="2994" y="103"/>
<path d="M3548 101h8l-4 4z" fill="#dcdcdc"/>
<rect x="2372" y="111" width="1187" height="2" fill="#007acc"/>

<!-- editor -->
<rect x="2372" y="113" width="1159" height="668" fill="#1e1e1e"/>
<rect x="2372" y="113" width="17" height="668" fill="#333337"/>
<rect x="2443" y="113" width="5" height="668" fill="#5a7a2c"/>
<path d="M2456 175v10M2456 191v3M2456 207v4M2456 223v4M2456 239v4M2456 255v450M2456 711v70" stroke="#808080"/>
<g stroke="#808080" stroke-dasharray="4 3"><path d="M2467 241v540"/><path d="M2495 257v524"/><path d="M2523 353v168M2523 545v236"/><path d="M2551 385v112M2551 561v48M2551 625v48M2551 689v64M2551 769v12"/></g>
<g fill="#1e1e1e" stroke="#a0a0a0"><rect x="2451.500" y="163.500" width="9" height="11"/><rect x="2451.500" y="195.500" width="9" height="11"/><rect x="2451.500" y="211.500" width="9" height="11"/><rect x="2451.500" y="227.500" width="9" height="11"/><rect x="2451.500" y="243.500" width="9" height="11"/><rect x="2451.500" y="339.500" width="9" height="11"/><rect x="2451.500" y="371.500" width="9" height="11"/><rect x="2451.500" y="531.500" width="9" height="11"/><rect x="2451.500" y="547.500" width="9" height="11"/><rect x="2451.500" y="611.500" width="9" height="11"/><rect x="2451.500" y="675.500" width="9" height="11"/><rect x="2451.500" y="755.500" width="9" height="11"/></g>
<g stroke="#d0d0d0"><path d="M2453.500 169h5M2453.500 201h5M2453.500 217h5M2453.500 233h5M2453.500 249h5M2453.500 345h5M2453.500 377h5M2453.500 537h5M2453.500 553h5M2453.500 617h5M2453.500 681h5M2453.500 761h5"/></g>
<g class="ln"><text x="2441" y="125">10</text><text x="2441" y="141">11</text><text x="2441" y="157">12</text><text x="2441" y="173">13</text><text x="2441" y="189">14</text><text x="2441" y="205">15</text><text x="2441" y="221">16</text><text x="2441" y="237">17</text><text x="2441" y="253">18</text><text x="2441" y="269">19</text><text x="2441" y="285">20</text><text x="2441" y="301">21</text><text x="2441" y="317">22</text><text x="2441" y="333">23</text><text x="2441" y="349">24</text><text x="2441" y="365">25</text><text x="2441" y="381">26</text><text x="2441" y="397">27</text><text x="2441" y="413">28</text><text x="2441" y="429">29</text><text x="2441" y="445">30</text><text x="2441" y="461">31</text><text x="2441" y="477">32</text><text x="2441" y="493">33</text><text x="2441" y="509">34</text><text x="2441" y="525">35</text><text x="2441" y="541">36</text><text x="2441" y="557">37</text><text x="2441" y="573">38</text><text x="2441" y="589">39</text><text x="2441" y="605">40</text><text x="2441" y="621">41</text><text x="2441" y="637">42</text><text x="2441" y="653">43</text><text x="2441" y="669">44</text><text x="2441" y="685">45</text><text x="2441" y="701">46</text><text x="2441" y="717">47</text><text x="2441" y="733">48</text><text x="2441" y="749">49</text><text x="2441" y="765">50</text><text x="2441" y="781">51</text></g>
<path d="M2392 561l5 2 3 14M2392 566l6-5" stroke="#ddd" stroke-width="2" fill="none"/>
<!-- highlights -->
<g fill="#424245">
<rect x="2460" y="113" width="466" height="16"/>
<rect x="2639" y="257" width="56" height="16"/><rect x="2639" y="273" width="98" height="16"/><rect x="2639" y="289" width="105" height="16"/><rect x="2639" y="305" width="224" height="16"/><rect x="2723" y="321" width="63" height="16"/>
<rect x="2688" y="401" width="238" height="16"/><rect x="2688" y="449" width="784" height="16"/>
<rect x="2695" y="577" width="238" height="16"/><rect x="2695" y="641" width="280" height="16"/><rect x="2695" y="705" width="245" height="16"/>
</g>
<g fill="#dcdc9c"><rect x="2632" y="257" width="7" height="16"/><rect x="2632" y="273" width="7" height="16"/><rect x="2632" y="289" width="7" height="16"/><rect x="2632" y="305" width="7" height="16"/><rect x="2674" y="449" width="14" height="16"/><rect x="3472" y="449" width="7" height="16"/><rect x="2688" y="577" width="7" height="16"/><rect x="2688" y="641" width="7" height="16"/><rect x="2688" y="705" width="7" height="16"/></g>
<rect x="2461" y="561" width="1069" height="15" fill="none" stroke="#464646" stroke-width="2"/>
<rect x="2576" y="561" width="7" height="16" fill="#0e4583"/><rect x="2828" y="561" width="7" height="16" fill="#0e4583"/>
<path d="M2828 257h56M2982 257h84" stroke="#c03030" stroke-width="1.500"/>
<g class="m" clip-path="url(#cc)" fill="#c8c8c8">
<text x="2457" y="125"><tspan class="a">OptionsHtml</tspan> += <tspan class="s">$"&lt;option value=\"Value4\"&gt;MapName name 4&lt;/option&gt;"</tspan>;</text>
<text x="2457" y="173">"well text-center"<tspan class="g">&gt;</tspan></text>
<text x="2457" y="189"><tspan class="a">ss</tspan>="text-center"<tspan class="g">&gt;</tspan>Add / Edit server<tspan class="g">&lt;/</tspan><tspan class="b">h2</tspan><tspan class="g">&gt;</tspan></text>
<text x="2457" y="205"><tspan class="a">ass</tspan>="row"<tspan class="g">&gt;</tspan></text>
<text x="2457" y="221"><tspan class="b">v</tspan> <tspan class="a">class</tspan>="col-md-8 col-md-offset-2 col-lg-6 col-lg-offset-3"<tspan class="g">&gt;</tspan></text>
<text x="2464" y="237"><tspan class="g">&lt;</tspan><tspan class="b">div</tspan> <tspan class="a">class</tspan>="demo-form-wrapper"<tspan class="g">&gt;</tspan></text>
<text x="2492" y="253"><tspan class="g">&lt;</tspan><tspan class="b">form</tspan> <tspan class="a">method</tspan>="post" <tspan class="t">asp-area</tspan>="" <tspan class="t">asp-controller</tspan>="RustShop" <tspan class="t">asp-action</tspan>="EditCategory"<tspan class="g">&gt;</tspan></text>
<text x="2520" y="269"><tspan class="g">&lt;</tspan><tspan class="b">input</tspan> <tspan class="t">asp-for</tspan>="<tspan class="k">@</tspan><tspan class="p">Model.Id</tspan>" <tspan class="t">type</tspan>="hidden" <tspan class="g">/&gt;</tspan></text>
<text x="2520" y="285"><tspan class="g">&lt;</tspan><tspan class="b">input</tspan> <tspan class="t">asp-for</tspan>="<tspan class="k">@</tspan><tspan class="p">Model.ShopName</tspan>" <tspan class="t">type</tspan>="hidden" <tspan class="g">/&gt;</tspan></text>
<text x="2520" y="301"><tspan class="g">&lt;</tspan><tspan class="b">input</tspan> <tspan class="t">asp-for</tspan>="<tspan class="k">@</tspan><tspan class="p">Model.ShopTitle</tspan>" <tspan class="t">type</tspan>="hidden" <tspan class="g">/&gt;</tspan></text>
<text x="2520" y="317"><tspan class="g">&lt;</tspan><tspan class="b">input</tspan> <tspan class="t">asp-for</tspan>="<tspan class="k">@</tspan><tspan class="p">Model.RustServerEditViewModel.Id</tspan>" <tspan class="t">type</tspan>="hidden" <tspan class="g">/&gt;</tspan></text>
<text x="2520" y="333"><tspan class="g">&lt;</tspan><tspan class="b">div</tspan> <tspan class="t">asp-validation-summary</tspan>="ModelOnly" <tspan class="a">class</tspan>="alert alert-info"<tspan class="g">&gt;&lt;/</tspan><tspan class="b">div</tspan><tspan class="g">&gt;</tspan></text>
<text x="2520" y="349"><tspan class="g">&lt;</tspan><tspan class="b">div</tspan> <tspan class="a">class</tspan>="showInShopWrap"<tspan class="g">&gt;</tspan></text>
<text x="2548" y="365"><tspan class="g">&lt;</tspan><tspan class="b">label</tspan><tspan class="g">&gt;</tspan>Show in shop<tspan class="g">&lt;/</tspan><tspan class="b">label</tspan><tspan class="g">&gt;</tspan></text>
<text x="2548" y="381"><tspan class="g">&lt;</tspan><tspan class="b">label</tspan> <tspan class="a">class</tspan>="switch switch-primary m-l-lg"<tspan class="g">&gt;</tspan></text>
<text x="2576" y="397"><tspan class="g">&lt;</tspan><tspan class="b">input</tspan> <tspan class="a">id</tspan>="ShowInShop"</text>
<text x="2625" y="413"><tspan class="t">asp-for</tspan>="<tspan class="p">RustServerEditViewModel.ShowInShop</tspan>"</text>
<text x="2625" y="429"><tspan class="a">class</tspan>="switch-input"</text>
<text x="2625" y="445"><tspan class="t">type</tspan>="checkbox"</text>
<text x="2625" y="461"><tspan class="t">value</tspan>="<tspan class="k">@(</tspan><tspan class="p">Model</tspan>.<tspan class="p">RustServerEditViewModel</tspan>.<tspan class="p">ShowInShop</tspan> != <tspan class="b">null</tspan> ? <tspan class="p">@Model</tspan>.<tspan class="p">RustServerEditViewModel</tspan>.<tspan class="p">ShowInShop</tspan>.<tspan class="c">ToString</tspan>() : <tspan class="s">"true"</tspan><tspan class="k">)</tspan>"<tspan class="g">&gt;</tspan></text>
<text x="2576" y="477"><tspan class="g">&lt;</tspan><tspan class="b">span</tspan> <tspan class="a">class</tspan>="switch-track"<tspan class="g">&gt;&lt;/</tspan><tspan class="b">span</tspan><tspan class="g">&gt;</tspan></text>
<text x="2576" y="493"><tspan class="g">&lt;</tspan><tspan class="b">span</tspan> <tspan class="a">class</tspan>="switch-thumb"<tspan class="g">&gt;&lt;/</tspan><tspan class="b">span</tspan><tspan class="g">&gt;</tspan></text>
<text x="2548" y="509"><tspan class="g">&lt;/</tspan><tspan class="b">label</tspan><tspan class="g">&gt;</tspan></text>
<text x="2520" y="525"><tspan class="g">&lt;/</tspan><tspan class="b">div</tspan><tspan class="g">&gt;</tspan></text>
<text x="2520" y="541"><tspan class="g">&lt;</tspan><tspan class="b">div</tspan> <tspan class="a">id</tspan>="EditServerDiv"<tspan class="g">&gt;</tspan></text>
<text x="2548" y="557"><tspan class="g">&lt;</tspan><tspan class="b">div</tspan> <tspan class="a">class</tspan>="form-group"<tspan class="g">&gt;</tspan></text>
<text x="2576" y="573"><tspan class="g">&lt;</tspan><tspan class="b">label</tspan> <tspan class="a">class</tspan>="pull-left"<tspan class="g">&gt;</tspan>Name<tspan class="g">&lt;/</tspan><tspan class="b">label</tspan><tspan class="g">&gt;</tspan></text>
<text x="2576" y="589"><tspan class="g">&lt;</tspan><tspan class="b">input</tspan> <tspan class="t">asp-for</tspan>="<tspan class="k">@</tspan><tspan class="p">Model</tspan>.<tspan class="p">RustServerEditViewModel</tspan>.<tspan class="p">Name</tspan>" <tspan class="a">class</tspan>="form-control" <tspan class="t">type</tspan>="text"<tspan class="g">&gt;</tspan></text>
<text x="2548" y="605"><tspan class="g">&lt;/</tspan><tspan class="b">div</tspan><tspan class="g">&gt;</tspan></text>
<text x="2548" y="621"><tspan class="g">&lt;</tspan><tspan class="b">div</tspan> <tspan class="a">class</tspan>="form-group"<tspan class="g">&gt;</tspan></text>
<text x="2576" y="637"><tspan class="g">&lt;</tspan><tspan class="b">label</tspan> <tspan class="a">class</tspan>="pull-left"<tspan class="g">&gt;</tspan>Name in shop<tspan class="g">&lt;/</tspan><tspan class="b">label</tspan><tspan class="g">&gt;</tspan></text>
<text x="2576" y="653"><tspan class="g">&lt;</tspan><tspan class="b">input</tspan> <tspan class="t">asp-for</tspan>="<tspan class="k">@</tspan><tspan class="p">Model</tspan>.<tspan class="p">RustServerEditViewModel</tspan>.<tspan class="p">NameInShop</tspan>" <tspan class="a">class</tspan>="form-control" <tspan class="t">type</tspan>="text"<tspan class="g">&gt;</tspan></text>
<text x="2548" y="669"><tspan class="g">&lt;/</tspan><tspan class="b">div</tspan><tspan class="g">&gt;</tspan></text>
<text x="2548" y="685"><tspan class="g">&lt;</tspan><tspan class="b">div</tspan> <tspan class="a">class</tspan>="form-group"<tspan class="g">&gt;</tspan></text>
<text x="2576" y="701"><tspan class="g">&lt;</tspan><tspan class="b">label</tspan> <tspan class="a">class</tspan>="pull-left"<tspan class="g">&gt;</tspan>Index<tspan class="g">&lt;/</tspan><tspan class="b">label</tspan><tspan class="g">&gt;</tspan></text>
<text x="2576" y="717"><tspan class="g">&lt;</tspan><tspan class="b">input</tspan> <tspan class="t">asp-for</tspan>="<tspan class="k">@</tspan><tspan class="p">Model</tspan>.<tspan class="p">RustServerEditViewModel</tspan>.<tspan class="p">Index</tspan>" <tspan class="a">class</tspan>="form-control" <tspan class="t">type</tspan>="number"<tspan class="g">&gt;</tspan></text>
<text x="2576" y="733"><tspan class="g">&lt;</tspan><tspan class="b">span</tspan> <tspan class="a">class</tspan>="help-block"<tspan class="g">&gt;</tspan>Smaller index make category higher in list<tspan class="g">&lt;/</tspan><tspan class="b">span</tspan><tspan class="g">&gt;</tspan></text>
<text x="2548" y="749"><tspan class="g">&lt;/</tspan><tspan class="b">div</tspan><tspan class="g">&gt;</tspan></text>
<text x="2548" y="765"><tspan class="g">&lt;</tspan><tspan class="b">div</tspan> <tspan class="a">class</tspan>="form-group"<tspan class="g">&gt;</tspan></text>
<text x="2576" y="781"><tspan class="g">&lt;</tspan><tspan class="b">label</tspan> <tspan class="a">class</tspan>="pull-left"<tspan class="g">&gt;</tspan>IP Address<tspan class="g">&lt;/</tspan><tspan class="b">label</tspan><tspan class="g">&gt;</tspan></text>
</g>
<!-- find panel -->
<rect x="3251" y="113" width="280" height="57" fill="#1e1e1e"/>
<rect x="3251" y="113" width="280" height="4" fill="#1e1e1e"/><rect x="3251" y="166" width="280" height="4" fill="#333337"/>
<path d="M3257 126l4 4 4-4" stroke="#999" stroke-width="1.500" fill="none"/>
<rect x="3273" y="117" width="197" height="21" fill="#333337"/>
<text x="3277" y="133" font-size="12.500" fill="#dcdcdc" textLength="157">ctEditViewModel.ShowInShop</text>
<path d="M3445 124l8 8M3453 124l-8 8" stroke="#1c8fe0" stroke-width="1.600"/><use href="#dn" x="3464" y="128"/>
<path d="M3478 128h10M3484 123l5 5-5 5" stroke="#dcdcdc" stroke-width="1.600" fill="none"/><use href="#dn" x="3500" y="128"/>
<path d="M3515 124l8 8M3523 124l-8 8" stroke="#777" stroke-width="1.600"/>
<rect x="3274" y="143" width="18" height="18" fill="none" stroke="#3399ff" stroke-width="2"/><text x="3276" y="157" font-size="12" fill="#ccc">Aa</text>
<rect x="3298" y="143" width="18" height="18" fill="none" stroke="#3399ff" stroke-width="2"/><text x="3300" y="156" font-size="10" fill="#ccc">Ab</text>
<rect x="3325" y="153" width="4" height="5" fill="#ddd"/><text x="3330" y="158" font-size="13" fill="#aaa">*</text>
<text x="3346" y="157" font-size="12" fill="#77777a" textLength="104">Текущий документ</text><use href="#dn" x="3501" y="153"/>
<!-- overview scrollbar -->
<rect x="3531" y="113" width="28" height="668" fill="#3e3e42"/>
<rect x="3531" y="113" width="26" height="16" fill="#111"/><path d="M3537 120h14M3537 123h14M3544 114v4M3544 129v-4" stroke="#ddd"/>
<path d="M3544 131l7 12h-14z" fill="#ffcc00"/><rect x="3543.300" y="135" width="1.500" height="5" fill="#222"/>
<path d="M3544 150l5 5h-10z" fill="#999"/><path d="M3544 776l5-5h-10z" fill="#999"/>
<rect x="3536" y="199" width="18" height="170" fill="#686868"/>
<rect x="3532" y="162" width="4" height="434" fill="#5a7a2c"/><rect x="3532" y="203" width="4" height="4" fill="#333"/>
<path d="M3548 187h10M3548 192h10M3548 197h10M3548 286h10" stroke="#107010" stroke-width="2"/>
<path d="M3548 405h10" stroke="#c88a1d" stroke-width="2"/><rect x="3531" y="314" width="27" height="2" fill="#c8c8c8"/>
<!-- editor status -->
<rect x="2372" y="781" width="1187" height="17" fill="#3e3e42"/>
<rect x="2372" y="781" width="60" height="17" fill="#2d2d30"/>
<text x="2374" y="794" font-size="12" fill="#dcdcdc" textLength="31">100 %</text><path d="M2422 789h6l-3 3z" fill="#ddd"/>
<circle cx="2462" cy="790" r="6" fill="#1e7e34" stroke="#cdc"/><path d="M2459 790l2 3 4-5" stroke="#fff" stroke-width="1.300" fill="none"/>
<text x="2472" y="794" font-size="12" fill="#eee" textLength="126">Проблемы не найдены.</text>
<path d="M2637 785l-4 5 4 5z" fill="#888"/><rect x="2683" y="782" width="528" height="15" fill="#686868"/><path d="M3301 785l4 5-4 5z" fill="#888"/>
<text x="3334" y="794" font-size="12" fill="#dcdcdc" textLength="37">Стр: 38</text>
<text x="3389" y="794" font-size="12" fill="#dcdcdc" textLength="46">Симв: 43</text>
<text x="3454" y="795" font-size="12" fill="#dcdcdc" textLength="49">Пробелы</text>
<text x="3523" y="795" font-size="12" fill="#dcdcdc" textLength="25">CRLF</text>

<!-- diagnostics -->
<rect x="3565.500" y="71.500" width="268" height="727" fill="#252526" stroke="#3f3f46"/>
<rect x="3566" y="72" width="267" height="48" fill="#2d2d30"/>
<text x="3570" y="87" font-size="12" fill="#cfcfcf" textLength="122">Средства диагностики</text>
<path d="M3700 83h78" stroke="#505054" stroke-width="5" stroke-dasharray="1 2"/>
<path d="M3785 81h8l-4 4z" fill="#dcdcdc"/><use href="#pin" x="3806" y="82"/><use href="#xx" x="3822" y="82"/>
<circle cx="3584" cy="107" r="6.500" fill="none" stroke="#ddd" stroke-width="2" stroke-dasharray="3 1"/><circle cx="3584" cy="107" r="2" fill="none" stroke="#ddd"/>
<rect x="3602" y="97" width="1" height="20" fill="#46464a"/>
<rect x="3611" y="100" width="11" height="15" fill="none" stroke="#ddd" stroke-width="1.500"/><path d="M3618 107h8M3623 103l4 4-4 4" stroke="#3a9ee8" stroke-width="2" fill="none"/>
<rect x="3636" y="97" width="1" height="20" fill="#46464a"/>
<use href="#se" x="3651" y="105"/><use href="#se" x="3676" y="105"/>
<rect x="3694" y="102" width="4" height="8" fill="#ddd"/><rect x="3696" y="106" width="4" height="10" fill="#ddd"/><rect x="3701" y="104" width="4" height="12" fill="#999"/><rect x="3706" y="108" width="3" height="8" fill="#999"/>
<rect x="3566" y="120" width="267" height="22" fill="#252526"/>
<text x="3576" y="136" font-size="12.500" font-weight="bold" fill="#dcdcdc" textLength="163">Сеанс диагностики: 4:45 мин</text>
<path d="M3566 142h267M3566 164.500h267" stroke="#3f3f46"/>
<rect x="3598" y="142" width="5" height="22" fill="#eee"/><rect x="3796" y="142" width="5" height="22" fill="#eee"/>
<path d="M3695 142v22M3623 159v5M3647 159v5M3671 159v5M3719 159v5M3743 159v5M3767 159v5M3792 159v5" stroke="#555"/>
<text x="3697" y="156" font-size="12" fill="#dcdcdc" textLength="45">4:40мин</text>
<path d="M3578 172v7h-7z" fill="#ccc"/>
<text x="3583" y="181" font-size="12" font-weight="bold" fill="#dcdcdc" textLength="50">События</text>
<rect x="3603.500" y="185.500" width="194" height="46" fill="#252526" stroke="#555"/><path d="M3604 209h193" stroke="#aaa"/><path d="M3695 186v45" stroke="#3a3a3c"/>
<rect x="3584" y="234" width="0" height="0"/><rect x="3584" y="233" width="0" height="0"/>
<rect x="3584" y="189" width="10" height="13" fill="none" stroke="#ddd" stroke-width="1.500"/><path d="M3589 189v13" stroke="#ddd"/>
<use href="#bu" x="3589" y="219"/>
<path d="M3578 239v7h-7z" fill="#ccc"/>
<text x="3583" y="248" font-size="12" font-weight="bold" fill="#dcdcdc" textLength="127">Память процесса (МБ)</text>
<path d="M3737 236h8l-1 9-2 3-2-3z" fill="#f0c050"/><path d="M3759 236h12l-6 11z" fill="#3399ee"/><circle cx="3789" cy="242" r="6" fill="#6aa8c8"/>
<rect x="3603.500" y="253.500" width="194" height="68" fill="#252526" stroke="#555"/>
<rect x="3604" y="259" width="158" height="62" fill="#5a7d90"/><path d="M3604 259h158" stroke="#84aabb"/><path d="M3695 254v67" stroke="#4a5a64"/>
<g font-size="12" fill="#dcdcdc"><text x="3578" y="265" textLength="19">150</text><text x="3591" y="320">0</text><text x="3802" y="265" textLength="19">150</text><text x="3802" y="320">0</text></g>
<path d="M3578 329v7h-7z" fill="#ccc"/>
<text x="3583" y="338" font-size="12" font-weight="bold" fill="#dcdcdc" textLength="145">ЦП (% всех процессоров)</text>
<rect x="3603.500" y="342.500" width="194" height="68" fill="#252526" stroke="#555"/><path d="M3695 343v67" stroke="#3a3a3c"/><path d="M3604 410.500h158" stroke="#5a7d90"/>
<g font-size="12" fill="#dcdcdc"><text x="3578" y="355" textLength="19">100</text><text x="3591" y="410">0</text><text x="3802" y="355" textLength="19">100</text><text x="3802" y="410">0</text></g>
<rect x="3566" y="431" width="267" height="3" fill="#3f3f46"/>
<rect x="3570" y="438" width="50" height="21" fill="#333337"/>
<g class="ui"><text x="3576" y="452" textLength="39">Сводка</text><text x="3627" y="452" textLength="49">События</text><text x="3688" y="452" textLength="119">Использование памя</text></g>
<rect x="3807" y="438" width="26" height="21" fill="#2d2d30"/><path d="M3816 443l-6 5 6 5z" fill="#ccc"/><path d="M3823 443l6 5-6 5z" fill="#eee"/>
<g stroke="#3f3f46"><path d="M3566 459h267M3566 481h267M3566 538h267M3566 561h267M3566 590h267M3566 613h267"/></g>
<g class="ui">
<text x="3575" y="475" font-weight="bold" textLength="49">События</text>
<text x="3602" y="501" textLength="169">Отображение событий (0 из 0)</text>
<text x="3602" y="529" textLength="198">События Application Insights (0 из 0)</text>
<text x="3575" y="555" font-weight="bold" textLength="132">Использование памяти</text>
<text x="3602" y="581" textLength="88">Сделать снимок</text>
<text x="3575" y="607" font-weight="bold" textLength="110">Использование ЦП</text>
<text x="3602" y="633" textLength="111">Запись профиля ЦП</text>
</g>
<path d="M3581 497h13" stroke="#ccc" stroke-width="6" stroke-dasharray="2 1"/><use href="#bu" x="3589" y="523"/>
<rect x="3581" y="572" width="12" height="10" fill="none" stroke="#ccc"/><circle cx="3587" cy="577" r="2" fill="none" stroke="#ccc"/>
<circle cx="3587" cy="628" r="4.500" fill="none" stroke="#aaa" stroke-width="1.500"/>

<!-- visibles panel -->
<rect x="2371.500" y="805.500" width="817" height="179" fill="#2d2d30" stroke="#3f3f46"/>
<text x="2376" y="821" font-size="12" fill="#cfcfcf" textLength="51">Видимые</text>
<path d="M2435 817h700" stroke="#505054" stroke-width="5" stroke-dasharray="1 2"/>
<path d="M3139 815h8l-4 4z" fill="#dcdcdc"/><use href="#pin" x="3160" y="816"/><use href="#xx" x="3177" y="816"/>
<rect x="2373" y="829" width="224" height="21" fill="#3a3a3e"/>
<text x="2377" y="844" font-size="12" fill="#8c8c90" textLength="36">Поиск</text>
<use href="#se" x="2577" y="838" transform="translate(2577,838) scale(-.8,.8) translate(-2577,-838)"/><use href="#dn" x="2590" y="841"/>
<path d="M2606 840h12M2611 835l-5 5 5 5M2628 840h12M2635 835l5 5-5 5" stroke="#666" stroke-width="1.500" fill="none"/>
<text x="2648" y="845" font-size="12" fill="#707074" textLength="91">Глубина поиска:</text>
<rect x="2745.500" y="830.500" width="40" height="20" fill="#2d2d30" stroke="#434346"/><text x="2750" y="845" font-size="12" fill="#707074">3</text><use href="#dn" x="2778" y="841"/>
<rect x="2372" y="853" width="816" height="111" fill="#252526"/><rect x="2372" y="853" width="803" height="19" fill="#2a2a2c"/>
<g font-size="12" fill="#707074"><text x="2386" y="867" textLength="25">Имя</text><text x="2648" y="867" textLength="54">Значение</text><text x="3044" y="867" textLength="20">Тип</text></g>
<path d="M2641 853v19M3037 853v19" stroke="#3f3f46"/>
<rect x="3175" y="853" width="13" height="111" fill="#2d2d30"/><path d="M3180 858l5 5h-10z" transform="translate(0,0)" fill="#555"/><path d="M3180 958l5-5h-10z" fill="#555"/>
<rect x="2372" y="964" width="63" height="20" fill="#252526"/>
<g class="ui"><text class="blue" x="2376" y="978" textLength="52">Видимые</text><text x="2440" y="978" textLength="62">Локальные</text><text x="2514" y="978" textLength="137">Контрольные значения 1</text></g>

<!-- error list -->
<rect x="3195.500" y="805.500" width="638" height="179" fill="#2d2d30" stroke="#3f3f46"/>
<text x="3200" y="821" font-size="12" fill="#cfcfcf" textLength="89">Список ошибок</text>
<path d="M3296 817h480" stroke="#505054" stroke-width="5" stroke-dasharray="1 2"/>
<path d="M3784 815h8l-4 4z" fill="#dcdcdc"/><use href="#pin" x="3805" y="816"/><use href="#xx" x="3822" y="816"/>
<rect x="3203.500" y="830.500" width="149" height="20" fill="#333337" stroke="#434346"/>
<text x="3206" y="845" font-size="12" fill="#dcdcdc" textLength="74">Все решение</text><use href="#dn" x="3346" y="841"/>
<rect x="3364.500" y="829.500" width="86" height="21" fill="#333337" stroke="#3399ff"/><circle cx="3376" cy="840" r="7.500" fill="#e03030" stroke="#fff"/><path d="M3373 837l6 6M3379 837l-6 6" stroke="#fff" stroke-width="1.500"/>
<text x="3387" y="845" font-size="12" fill="#dcdcdc" textLength="56">0 Ошибки</text>
<rect x="3459.500" y="829.500" width="134" height="21" fill="#333337" stroke="#3399ff"/><path d="M3470 831l7.500 15h-15z" fill="#ffcc00"/><rect x="3469.300" y="836" width="1.500" height="6" fill="#222"/>
<text x="3482" y="845" font-size="12" fill="#dcdcdc" textLength="104">2 Предупреждения</text>
<circle cx="3613" cy="840" r="7.500" fill="#1c97ea" stroke="#fff"/><rect x="3612" y="838" width="2" height="6" fill="#fff"/><rect x="3612" y="835" width="2" height="2" fill="#fff"/>
<text x="3624" y="845" font-size="12" fill="#dcdcdc" textLength="100">0 из 7 Сообщения</text>
<rect x="3740.500" y="829.500" width="21" height="21" fill="none" stroke="#3399ff"/><path d="M3744 835l4 4M3748 835l-4 4" stroke="#e05050"/><path d="M3749 840h8l-3 4v5h-2v-5z" fill="#ccc"/>
<rect x="3197" y="855" width="636" height="18" fill="#3a3a3e"/>
<text x="3201" y="869" font-size="12" fill="#8c8c90" textLength="141">Поиск по списку ошибок</text>
<use href="#se" x="3812" y="862" transform="translate(3812,863) scale(-.8,.8) translate(-3812,-863)"/><use href="#dn" x="3826" y="866"/>
<rect x="3197" y="877" width="619" height="20" fill="#2d2d30"/>
<g class="ui"><text x="3253" y="892" textLength="20">Код</text><text x="3303" y="891" textLength="41">Описание</text><text x="3403" y="892" textLength="40">Проект</text><text x="3553" y="892" textLength="29">Файл</text><text x="3703" y="892" textLength="20">Ст...</text><text x="3738" y="892" textLength="78">Состояние по,</text></g>
<path d="M3347 884h10l-5 7z" fill="none" stroke="#ccc"/>
<path d="M3249 877v20M3301 877v20M3399 877v20M3549 877v20M3699 877v20M3734 877v20" stroke="#3f3f46"/>
<rect x="3197" y="897" width="619" height="50" fill="#3f3f46"/>
<g class="ui"><text x="3303" y="912" textLength="53">В данном</text><text x="3303" y="927" textLength="76">асинхронном</text><text x="3303" y="942" textLength="40">методе</text></g>
<rect x="3816" y="877" width="17" height="70" fill="#3e3e42"/><rect x="3820" y="895" width="9" height="8" fill="#777"/><path d="M3825 882l4 5h-8z" fill="#888"/><path d="M3825 942l4-5h-8z" fill="#999"/>
<rect x="3197" y="950" width="636" height="14" fill="#3e3e42"/><path d="M3207 952l-4 5 4 5z" fill="#999"/><rect x="3212" y="951" width="542" height="12" fill="#686868"/><path d="M3806 952l4 5-4 5z" fill="#999"/>
<rect x="3734" y="964" width="99" height="20" fill="#252526"/>
<g class="ui"><text x="3201" y="978" textLength="74">Стек вызовов</text><text x="3288" y="978" textLength="85">Точки останова</text><text x="3385" y="978" textLength="89">Параметры ис...</text><text x="3487" y="978" textLength="87">Командное ок...</text><text x="3590" y="978" textLength="87">Окно интерпр...</text><text x="3692" y="978" textLength="35">Вывод</text><text class="blue" x="3739" y="978" textLength="91">Список ошибок</text></g>

<!-- status bar -->
<rect x="1920" y="991" width="1920" height="23" fill="#ca5100"/>
<path d="M1928 997h12l-3 12h-12z" fill="none" stroke="#fff" stroke-width="1.500"/>
<text x="1948" y="1007" font-size="12" fill="#fff" textLength="38">Готово</text>
<path d="M3420 1010v-13M3416 1001l4-5 4 5" stroke="#fff" fill="none"/><text x="3431" y="1007" font-size="12" fill="#fff">1</text>
<path d="M3465 1008l6-10 2 2-6 10z" fill="#eee"/><text x="3483" y="1007" font-size="12" fill="#fff" textLength="12">36</text>
<path d="M3526 996l5 7-5 7-5-7z" fill="none" stroke="#fff" stroke-width="2"/><text x="3539" y="1007" font-size="12" fill="#fff" textLength="51">EasyShop</text>
<path d="M3615 997l4 5v8M3623 997l-4 5" stroke="#fff" stroke-width="2" fill="none"/><text x="3632" y="1007" font-size="12" fill="#fff" textLength="72">Development</text><path d="M3710 1005h6l-3-4z" fill="#fff"/>
<circle cx="3754" cy="1001" r="5" fill="#ddd"/><path d="M3748 1009q6-6 12 0" stroke="#ddd" stroke-width="2" fill="none"/><circle cx="3757" cy="1008" r="5" fill="#222"/><text x="3754" y="1012" font-size="10" fill="#fff">3</text>
<path d="M3793 1008l6-2 6-9v12h-12" fill="none" stroke="#f0c040" stroke-width="1.500"/>
<circle cx="3829" cy="1002" r="8" fill="#222" stroke="#bbb" stroke-width="1.500"/>

<!-- taskbar -->
<rect x="1920" y="1014" width="1920" height="40" fill="#101010"/>
<g fill="#fff"><path d="M1936 1029l7-1v7h-7zM1944 1027.500l8-1.500v9h-8zM1936 1036h7v7l-7-1zM1944 1036h8v9l-8-1.500z"/></g>
<rect x="1968" y="1014" width="344" height="40" fill="#3c3c3c"/>
<circle cx="1992" cy="1031" r="5" fill="none" stroke="#dcdcdc" stroke-width="1.500"/><path d="M1988 1035l-6 8" stroke="#dcdcdc" stroke-width="1.500"/>
<text x="2008" y="1040" font-size="14" fill="#c8c8c8" textLength="128" lengthAdjust="spacingAndGlyphs">Type here to search</text>
<circle cx="2336" cy="1034" r="6.500" fill="none" stroke="#fff" stroke-width="2.500"/>
<path d="M2377 1030h14v9h-14zM2375 1026h17M2375 1043h17M2395 1028v4M2395 1036v4" fill="none" stroke="#fff" stroke-width="1.300"/>
<path d="M2424 1023l20-2v24l-17 4z" fill="#1cb4e0"/><rect x="2428" y="1029" width="13" height="14" fill="#111"/><text x="2429" y="1038" font-size="8" font-weight="bold" fill="#fff">WS</text>
<rect x="2474" y="1028" width="20" height="7" fill="#f5c242"/><rect x="2474" y="1033" width="20" height="14" fill="#f8d775"/><rect x="2483" y="1037" width="6" height="7" fill="#2a7cd0"/>
<circle cx="2533" cy="1034" r="11" fill="#dd4b39"/><path d="M2533 1034l-10 5a11 11 0 0 0 11 6z" fill="#3aa757"/><path d="M2533 1034l10-5a11 11 0 0 1-9 16z" fill="#fbc02d"/><circle cx="2533" cy="1034" r="5" fill="#fff"/><circle cx="2533" cy="1034" r="3.500" fill="#4285f4"/>
<rect x="2558" y="1014" width="48" height="40" fill="#333"/>
<path d="M2573 1028l4-2 12 14 2-16v22l-2 2-12-14-4 4-2-2 4-5-4-5z" fill="#8a5cc8"/>
<path d="M2621 1028l4-2 12 14 2-16v22l-2 2-12-14-4 4-2-2 4-5-4-5z" fill="#8a5cc8"/><circle cx="2636" cy="1043" r="4" fill="#12b0a0"/>
<g fill="#999"><rect x="2415" y="1052" width="40" height="2"/><rect x="2513" y="1052" width="40" height="2"/><rect x="2558" y="1052" width="48" height="2"/><rect x="2611" y="1052" width="40" height="2"/></g>
<path d="M3622 1039l5-7 5 7" stroke="#ddd" fill="none"/>
<path d="M3647 1042l2-10M3652 1042q0-6 6-9M3655 1042q0-3 3-5" stroke="#aaa" fill="none"/>
<path d="M3668 1031h3l3-3v14l-3-3h-3zM3677 1031q3 4 0 8M3680 1029q4 6 0 12" stroke="#ddd" fill="none"/>
<text x="3693" y="1039" font-size="12" fill="#ddd" textLength="24">ENG</text>
<text x="3733" y="1028" font-size="12" fill="#ddd" textLength="44">8:27 PM</text>
<text x="3726" y="1047" font-size="12" fill="#ddd" textLength="59">12/28/2019</text>
<rect x="3800" y="1027" width="14" height="11" fill="#eee"/><circle cx="3815" cy="1039" r="7" fill="#222" stroke="#ccc"/><text x="3812" y="1043" font-size="11" fill="#fff">2</text>

<!-- red annotation -->
<rect x="14" y="221" width="1780" height="308" fill="none" stroke="#d90808" stroke-width="6"/>
<path d="M1797 419L2400 448L2575 456V446L2610 465L2575 487V476L1797 438Z" fill="#d60808"/>
<rect x="2620" y="467" width="883" height="6" fill="#d90808"/>
</svg>
</body></html>
